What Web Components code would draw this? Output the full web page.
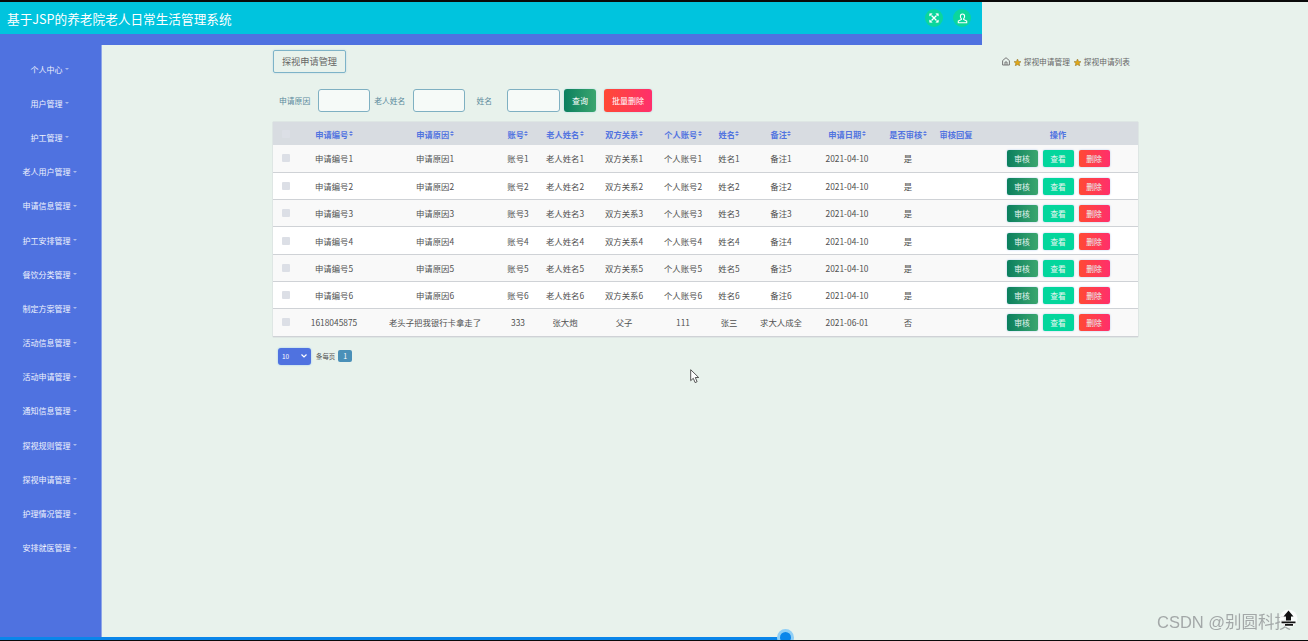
<!DOCTYPE html>
<html lang="zh">
<head>
<meta charset="utf-8">
<title>探视申请管理</title>
<style>
  html, body { margin: 0; height: 100%; }
  body { background: #e8f2ec; overflow: hidden; font-family: "Noto Sans CJK SC", "Noto Sans", sans-serif; }
</style>
</head>
<body>
<app-shell>
  <top-bar slot="top" title-text="基于JSP的养老院老人日常生活管理系统"></top-bar>
  <side-menu slot="side"></side-menu>
  <page-title>探视申请管理</page-title>
  <search-bar></search-bar>
  <visit-table></visit-table>
  <pager-bar></pager-bar>
</app-shell>
<screen-overlay></screen-overlay>

<script>
class AppShell extends HTMLElement {
    constructor() {
        super();
        this.attachShadow({ mode: 'open' });
        this.shadowRoot.innerHTML = `
      <style>
        :host { display: block; padding-top: 2px; }
        .body { display: flex; height: 592px; }
        .main { flex: 1; padding: 5px 170px 0 171px; min-width: 0; }
      </style>
      <slot name="top"></slot>
      <div class="body">
        <slot name="side"></slot>
        <div class="main"><slot></slot></div>
      </div>
    `;
    }
}

class TopBar extends HTMLElement {
    constructor() {
        super();
        this.attachShadow({ mode: 'open' });
    }

    connectedCallback() {
        this.shadowRoot.innerHTML = `
      <style>
        :host { display: block; width: 982px; background: #4f72e0; padding-bottom: 11px; }
        .bar {
          height: 32px;
          background: #00c4de;
          display: flex;
          align-items: center;
          padding: 0 11px 0 7px;
        }
        h1 { margin: 0; flex: 1; font-size: 12.65px; font-weight: 400; color: #fff; white-space: nowrap; }
        .round {
          width: 18px;
          height: 18px;
          border-radius: 50%;
          background: #0bd69c;
          display: flex;
          align-items: center;
          justify-content: center;
          margin-left: 10px;
        }
      </style>
      <div class="bar">
        <h1>${this.getAttribute('title-text')}</h1>
        <span class="round">
          <svg width="10" height="10" viewBox="0 0 10 10" fill="#fff" stroke="#fff" stroke-width="1.3">
            <path d="M2.500 2.500L7.500 7.500M7.500 2.500L2.500 7.500" fill="none"/>
            <path d="M.7.7h2.400L.7 3.100zM9.300.7H6.900L9.300 3.100zM.7 9.300h2.400L.7 6.900zM9.300 9.300H6.900L9.300 6.900z" stroke-width=".6"/>
          </svg>
        </span>
        <span class="round">
          <svg width="11" height="11" viewBox="0 0 11 11" fill="none" stroke="#fff" stroke-width="1.1">
            <path d="M5.500 1C4 1 3.400 2 3.400 3.300c0 1 .5 2 1 2.500v.7L1.300 8v1.800h8.400V8L6.600 6.500v-.7c.5-.5 1-1.500 1-2.500C7.600 2 7 1 5.500 1z"/>
          </svg>
        </span>
      </div>
    `;
    }
}

class SideMenu extends HTMLElement {
    constructor() {
        super();
        this.attachShadow({ mode: 'open' });
    }

    connectedCallback() {
        const items = ['个人中心', '用户管理', '护工管理', '老人用户管理', '申请信息管理', '护工安排管理',
            '餐饮分类管理', '制定方案管理', '活动信息管理', '活动申请管理', '通知信息管理', '探视规则管理',
            '探视申请管理', '护理情况管理', '安排就医管理'];

        this.shadowRoot.innerHTML = `
      <style>
        :host {
          display: block;
          flex: 0 0 102px;
          box-sizing: border-box;
          background: #4f72e0;
          border-right: 1px solid #8ea6e8;
          padding-top: 7px;
        }
        a {
          display: flex;
          align-items: center;
          justify-content: center;
          height: 34.2px;
          padding-right: 2px;
          color: #f0f3fd;
          font-size: 8px;
          white-space: nowrap;
        }
        a::after {
          content: '';
          margin-left: 2px;
          border: 2.500px solid transparent;
          border-top-color: #a9b9ec;
          border-bottom: 0;
        }
      </style>
      ${items.map((item) => `<a>${item}</a>`).join('')}
    `;
    }
}

class PageTitle extends HTMLElement {
    constructor() {
        super();
        this.attachShadow({ mode: 'open' });
        this.shadowRoot.innerHTML = `
      <style>
        :host { display: flex; align-items: center; justify-content: space-between; height: 23px; }
        .tag {
          box-sizing: border-box;
          width: 73px;
          height: 23px;
          border: 1px solid #7db3c8;
          border-radius: 2px;
          color: #666;
          font-size: 9.2px;
          line-height: 21px;
          text-align: center;
          box-shadow: 0 0 2px #b9d6e0;
        }
        .crumbs {
          display: flex;
          align-items: center;
          margin-top: -1px;
          padding-right: 8px;
          color: #666;
          font-size: 7.7px;
          white-space: nowrap;
        }
        .star { margin: 2px 3px 0 4px; }
      </style>
      <div class="tag"><slot></slot></div>
      <div class="crumbs">
        <svg width="8" height="9" viewBox="0 0 8 9" fill="none" stroke="#777" stroke-width="1">
          <path d="M.6 3.6L4 .7l3.4 2.9V8H.6zM3 8V5h2v3"/>
        </svg>
        <svg class="star" width="7" height="7" viewBox="0 0 10 10"><path d="M5 0l1.5 3.4 3.5.4-2.6 2.4.8 3.6L5 8 1.800 9.800l.8-3.600L0 3.800l3.500-.4z" fill="#e0a818" stroke="#8a6a1a" stroke-width=".7"/></svg>
        <span>探视申请管理</span>
        <svg class="star" width="7" height="7" viewBox="0 0 10 10"><path d="M5 0l1.5 3.4 3.5.4-2.6 2.4.8 3.6L5 8 1.800 9.800l.8-3.600L0 3.800l3.500-.4z" fill="#e0a818" stroke="#8a6a1a" stroke-width=".7"/></svg>
        <span>探视申请列表</span>
      </div>
    `;
    }
}

class SearchBar extends HTMLElement {
    constructor() {
        super();
        this.attachShadow({ mode: 'open' });
        this.shadowRoot.innerHTML = `
      <style>
        :host { display: flex; align-items: center; height: 23px; margin: 16px 0 10px; padding-left: 6px; }
        label { color: #5b8a9c; font-size: 7.8px; white-space: nowrap; }
        input {
          box-sizing: border-box;
          width: 52px;
          height: 23px;
          border: 1px solid #7fb0c2;
          border-radius: 3px;
          background: #f6faf8;
          padding: 0;
          margin: 0;
        }
        button {
          height: 23px;
          border: 0;
          border-radius: 3px;
          color: #fff;
          font: inherit;
          font-size: 8px;
          padding: 0;
        }
        .find { width: 32px; margin-left: 4px; background: linear-gradient(90deg, #0b7f5e, #3ba66f); box-shadow: 0 0 2px #a8d8e4; }
        .wipe { width: 48px; margin-left: 8px; background: linear-gradient(90deg, #ff4a34, #ff2f6c); box-shadow: 0 0 2px #a8d8e4; }
      </style>
      <label style="margin-right: 8px">申请原因</label><input>
      <label style="margin: 0 8px 0 4px">老人姓名</label><input>
      <label style="margin: 0 15px 0 11px">姓名</label><input style="width: 53px">
      <button class="find">查询</button>
      <button class="wipe">批量删除</button>
    `;
    }
}

class SortHead extends HTMLElement {
    constructor() {
        super();
        this.attachShadow({ mode: 'open' });
        this.shadowRoot.innerHTML = `
      <style>
        :host { display: inline-flex; align-items: center; }
        i { display: inline-flex; flex-direction: column; gap: 1px; margin-left: .5px; }
        i b { border: 2px solid transparent; border-top: 0; border-bottom: 2.500px solid #5a7ae2; }
        i b + b { border-bottom: 0; border-top: 2.500px solid #5a7ae2; }
      </style>
      <slot></slot><i><b></b><b></b></i>
    `;
    }
}

class RowActions extends HTMLElement {
    constructor() {
        super();
        this.attachShadow({ mode: 'open' });
        this.shadowRoot.innerHTML = `
      <style>
        :host { display: inline-flex; gap: 5px; vertical-align: middle; margin-top: 1px; }
        button {
          width: 31px;
          height: 17px;
          padding: 0;
          border: 0;
          border-radius: 2px;
          color: #e8f6f2;
          font: inherit;
          font-size: 7.8px;
          box-shadow: 0 0 2px #a9c8ef;
        }
        .audit { background: linear-gradient(90deg, #0b7f5e, #3ba66f); }
        .view { background: #03d69c; }
        .drop { background: linear-gradient(90deg, #ff4a34, #ff2f6c); }
      </style>
      <button class="audit">审核</button><button class="view">查看</button><button class="drop">删除</button>
    `;
    }
}

class VisitTable extends HTMLElement {
    constructor() {
        super();
        this.attachShadow({ mode: 'open' });
    }

    connectedCallback() {
        const widths = [26, 70, 132, 34, 60, 58, 60, 32, 72, 60, 62, 34, 165];
        const heads = [['申请编号', 1], ['申请原因', 1], ['账号', 1], ['老人姓名', 1], ['双方关系', 1], ['个人账号', 1],
            ['姓名', 1], ['备注', 1], ['申请日期', 1], ['是否审核', 1], ['审核回复', 0], ['操作', 0]];

        const rows = [];
        for (let n = 1; n <= 6; n++) {
            rows.push([`申请编号${n}`, `申请原因${n}`, `账号${n}`, `老人姓名${n}`, `双方关系${n}`, `个人账号${n}`,
                `姓名${n}`, `备注${n}`, '2021-04-10', '是', '']);
        }
        rows.push(['1618045875', '老头子把我银行卡拿走了', '333', '张大炮', '父子', '111', '张三', '求大人成全', '2021-06-01', '否', '']);

        this.shadowRoot.innerHTML = `
      <style>
        :host { display: block; box-shadow: 0 0 1px #aab; }
        table { width: 865px; table-layout: fixed; border-collapse: collapse; font-size: 8.4px; color: #505050; }
        th { height: 23px; padding: 0; background: #d8dce1; color: #5274e0; font-weight: 700; font-size: 8.2px; white-space: nowrap; }
        td { height: 27.3px; box-sizing: border-box; padding: 0; text-align: center; white-space: nowrap; border-bottom: 1px solid #cfd2d6; }
        tbody tr:nth-child(odd) { background: #f9f9f9; }
        tbody tr:nth-child(even) { background: #fff; }
        .box { display: block; width: 8px; height: 8px; margin: 0 0 0 9px; background: #dcdfe6; border-radius: 1px; }
        .act { padding-left: 5px; }
      </style>
      <table>
        <colgroup>${widths.map((w) => `<col style="width: ${w}px">`).join('')}</colgroup>
        <thead>
          <tr>
            <th><span class="box"></span></th>
            ${heads.map(([text, sort], i) => `<th class="${i === 11 ? 'act' : ''}">${sort ? `<sort-head>${text}</sort-head>` : text}</th>`).join('')}
          </tr>
        </thead>
        <tbody>
          ${rows.map((cells) => `
            <tr>
              <td><span class="box"></span></td>
              ${cells.map((c) => `<td>${c}</td>`).join('')}
              <td class="act"><row-actions></row-actions></td>
            </tr>`).join('')}
        </tbody>
      </table>
    `;
    }
}

class PagerBar extends HTMLElement {
    constructor() {
        super();
        this.attachShadow({ mode: 'open' });
        this.shadowRoot.innerHTML = `
      <style>
        :host { display: flex; align-items: center; height: 17px; margin-top: 11px; padding-left: 5px; font-size: 6.4px; color: #555; }
        .size {
          box-sizing: border-box;
          width: 33px;
          height: 17px;
          padding: 0 4px 0 4px;
          display: flex;
          align-items: center;
          justify-content: space-between;
          border-radius: 3px;
          background: #4f72e0;
          color: #fff;
          box-shadow: 0 0 2px #8fc4f0;
        }
        .txt { margin: 0 3px 0 5px; }
        .page { width: 14px; height: 12px; line-height: 12px; text-align: center; border-radius: 2px; background: #4a90b8; color: #fff; font-size: 7px; }
      </style>
      <span class="size">10
        <svg width="6" height="4" viewBox="0 0 6 4" fill="none" stroke="#fff" stroke-width="1.2"><path d="M.5.5L3 3 5.500.5"/></svg>
      </span>
      <span class="txt">条每页</span>
      <span class="page">1</span>
    `;
    }
}

class ScreenOverlay extends HTMLElement {
    constructor() {
        super();
        this.attachShadow({ mode: 'open' });
        this.shadowRoot.innerHTML = `
      <style>
        :host { position: fixed; inset: 0; display: block; pointer-events: none; }
        .top { position: absolute; left: 0; right: 0; top: 0; height: 2px; background: #0a0a0a; }
        .line { position: absolute; left: 0; right: 0; bottom: 0; height: 1px; background: #0a0a0a; }
        .progress { position: absolute; left: 0; width: 785px; bottom: 1px; height: 3px; background: #0a86ea; }
        .knob {
          position: absolute;
          left: 777px;
          top: 629px;
          width: 17px;
          height: 11px;
          overflow: hidden;
        }
        .knob::before {
          content: '';
          position: absolute;
          left: 0;
          top: 0;
          width: 17px;
          height: 17px;
          box-sizing: border-box;
          border-radius: 50%;
          background: #0a86ea;
          border: 3px solid #8fcff6;
        }
        .mark {
          position: absolute;
          left: 1157px;
          top: 610px;
          color: #a3a8a8;
          font-family: "Liberation Sans", "Noto Sans CJK SC", sans-serif;
          font-size: 16.500px;
          line-height: 24px;
          white-space: nowrap;
        }
        .arrow { position: absolute; left: 1279px; top: 609px; }
        .cursor { position: absolute; left: 690px; top: 369px; }
      </style>
      <div class="top"></div>
      <div class="progress"></div>
      <div class="knob"></div>
      <div class="line"></div>
      <svg class="cursor" width="10" height="15" viewBox="0 0 10 15">
        <path d="M.7.7v11l2.600-2.400 1.800 4.300 2-.9-1.800-4.200h3.400z" fill="#fff" stroke="#444" stroke-width=".9"/>
      </svg>
      <div class="mark">CSDN @别圆科技</div>
      <svg class="arrow" width="19" height="19" viewBox="0 0 19 19">
        <circle cx="9.500" cy="9.500" r="9" fill="#fff" opacity=".75"/>
        <path d="M9.500 1.500L4.500 7.500h2.500v4h5v-4h2.500zM2.500 12.500h14v1.800h-14zM6 15h8v1.800H6z" fill="#111"/>
      </svg>
    `;
    }
}

customElements.define('app-shell', AppShell);
customElements.define('top-bar', TopBar);
customElements.define('side-menu', SideMenu);
customElements.define('page-title', PageTitle);
customElements.define('search-bar', SearchBar);
customElements.define('sort-head', SortHead);
customElements.define('row-actions', RowActions);
customElements.define('visit-table', VisitTable);
customElements.define('pager-bar', PagerBar);
customElements.define('screen-overlay', ScreenOverlay);
</script>
</body>
</html>
